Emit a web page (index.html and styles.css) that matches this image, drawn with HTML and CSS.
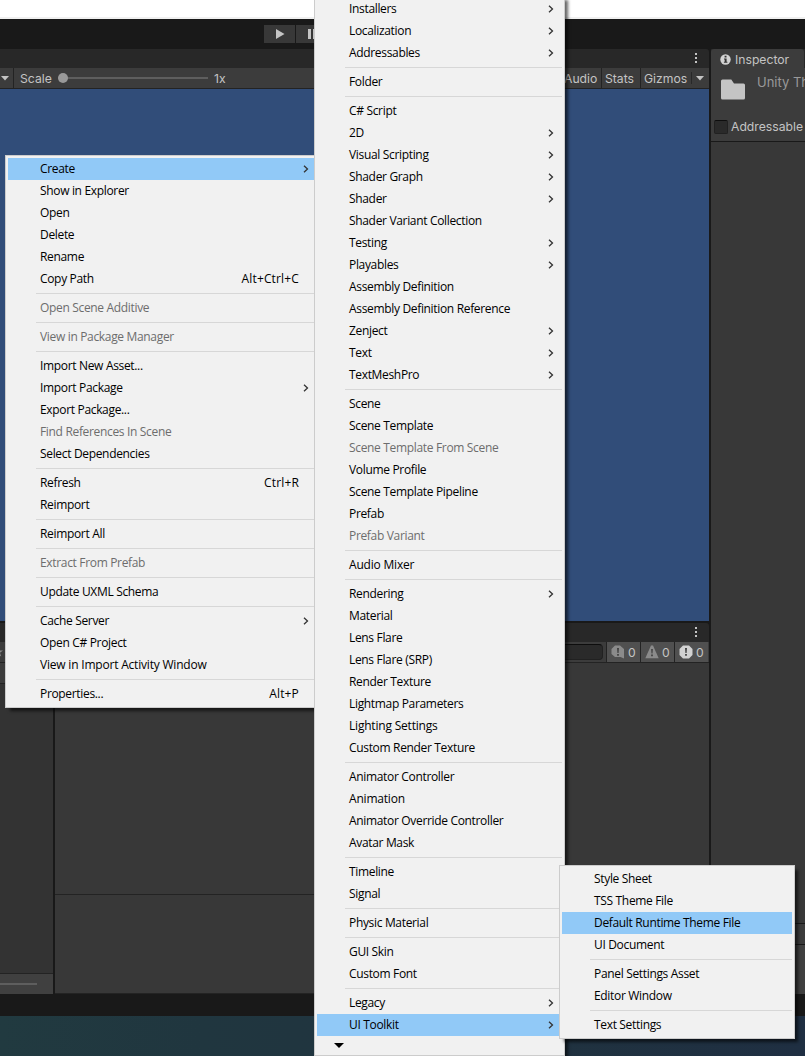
FILE: index.html
```html
<!DOCTYPE html>
<html lang="en">
<head>
    <meta charset="UTF-8">
    <title>Unity Editor</title>
    <link rel="stylesheet" href="styles.css">
</head>
<body>
    <svg width="0" height="0" class="defs">
        <symbol id="dots" viewBox="0 0 4 12"><path d="M1 1h2v2H1zM1 5h2v2H1zM1 9h2v2H1z" fill="#c4c4c4"/></symbol>
        <symbol id="down" viewBox="0 0 8 5"><path d="M0 0h8L4 4.5z" fill="#c4c4c4"/></symbol>
        <symbol id="arrow" viewBox="0 0 6 8"><path d="M1 .7L4.5 4 1 7.3" fill="none" stroke="#333" stroke-width="1.3"/></symbol>
    </svg>
    <div class="editor">
        <div class="titlebar"></div>
        <div class="playbar">
            <div class="playBtn"><svg width="10" height="12" viewBox="0 0 10 12"><path d="M1 1l8.5 5L1 11z" fill="#c4c4c4"/></svg></div>
            <div class="playBtn"><svg width="10" height="12" viewBox="0 0 10 12"><path d="M1 1h3v10H1zM6 1h3v10H6z" fill="#c4c4c4"/></svg></div>
        </div>
        <div class="docks">
            <div class="left">
                <div class="tabs"><svg class="dots"><use href="#dots"/></svg></div>
                <div class="toolbar">
                    <div class="drop"><svg width="8" height="5"><use href="#down"/></svg></div>
                    <span class="scale">Scale</span>
                    <div class="slider"><i></i></div>
                    <span class="factor">1x</span>
                    <div class="tools">
                        <span class="audio">Audio</span>
                        <span class="stats">Stats</span>
                        <span class="gizmos">Gizmos</span>
                        <div class="gizmoDrop"><svg width="8" height="5"><use href="#down"/></svg></div>
                    </div>
                </div>
                <div class="gameView"></div>
                <div class="tabs"><svg class="dots"><use href="#dots"/></svg></div>
                <div class="toolbar console">
                    <svg class="star" width="10" height="10" viewBox="0 0 10 10"><path d="M5 0l1.300 3.500H10L7 5.800 8.200 9.500 5 7.300 1.800 9.500 3 5.800 0 3.500h3.700z" fill="#8a8a8a"/></svg>
                    <div class="search"></div>
                    <div class="count"><svg width="14" height="14" viewBox="0 0 14 14"><path d="M4 .5h5L13 4v9.500L9.500 12H4L.5 9V4z" fill="#8b8b8b"/><path d="M6 3h2l-.4 5H6.400zM6.100 9h1.800v1.700H6.100z" fill="#444"/></svg><span>0</span></div>
                    <div class="count"><svg width="14" height="14" viewBox="0 0 14 14"><path d="M6 .5h2l5.700 12.800H.3z" fill="#8b8b8b"/><path d="M6.100 4h1.800l-.4 4.500h-1zM6.100 9.500h1.800v1.700H6.100z" fill="#444"/></svg><span>0</span></div>
                    <div class="count"><svg width="14" height="14" viewBox="0 0 14 14"><path d="M4 .5h6L13.500 4v6L10 13.500H4L.5 10V4z" fill="#d2d2d2"/><path d="M6 3h2l-.4 5H6.400zM6.100 9h1.800v1.700H6.100z" fill="#444"/></svg><span>0</span></div>
                </div>
                <div class="project">
                    <div class="tree">
                        <div class="treeTop"></div>
                        <div class="treeBottom"><i></i></div>
                    </div>
                    <div class="assets"><div class="assetsTop"></div></div>
                </div>
            </div>
            <div class="inspector">
                <div class="inspectorTabs">
                    <div class="tab"><svg width="11" height="11" viewBox="0 0 11 11"><circle cx="5.500" cy="5.500" r="5.200" fill="#d2d2d2"/><path d="M4.600 1.700h1.900v1.700H4.600zM4 4.400h2.600v3.400h.8v1H3.900v-1h.8V5.400H4z" fill="#333"/></svg>Inspector</div>
                </div>
                <div class="assetHead">
                    <div class="assetName">
                        <svg width="24" height="21" viewBox="0 0 24 21"><path d="M0 2Q0 .5 1.500.5h8.800L13 4.500h9.500Q24 4.500 24 6v13q0 1.500-1.500 1.500h-21Q0 20.500 0 19z" fill="#c4c4c4"/></svg>
                        <span>Unity Th</span>
                    </div>
                    <div class="addressable"><i></i><span>Addressable</span></div>
                </div>
                <div class="inspectorBody"></div>
                <div class="previewBar"></div>
                <div class="preview"></div>
            </div>
        </div>
        <div class="statusbar"></div>
        <div class="desktop"></div>
    </div>

    <ul class="menu contextMenu">
        <li class="active">Create<svg><use href="#arrow"/></svg></li>
        <li>Show in Explorer</li>
        <li>Open</li>
        <li>Delete</li>
        <li>Rename</li>
        <li>Copy Path<kbd>Alt+Ctrl+C</kbd></li>
        <li class="line"></li>
        <li class="disabled">Open Scene Additive</li>
        <li class="line"></li>
        <li class="disabled">View in Package Manager</li>
        <li class="line"></li>
        <li>Import New Asset...</li>
        <li>Import Package<svg><use href="#arrow"/></svg></li>
        <li>Export Package...</li>
        <li class="disabled">Find References In Scene</li>
        <li>Select Dependencies</li>
        <li class="line"></li>
        <li>Refresh<kbd>Ctrl+R</kbd></li>
        <li>Reimport</li>
        <li class="line"></li>
        <li>Reimport All</li>
        <li class="line"></li>
        <li class="disabled">Extract From Prefab</li>
        <li class="line"></li>
        <li>Update UXML Schema</li>
        <li class="line"></li>
        <li>Cache Server<svg><use href="#arrow"/></svg></li>
        <li>Open C# Project</li>
        <li class="wide">View in Import Activity Window</li>
        <li class="line"></li>
        <li>Properties...<kbd>Alt+P</kbd></li>
    </ul>

    <ul class="menu createMenu">
        <li>Installers<svg><use href="#arrow"/></svg></li>
        <li>Localization<svg><use href="#arrow"/></svg></li>
        <li>Addressables<svg><use href="#arrow"/></svg></li>
        <li class="line"></li>
        <li>Folder</li>
        <li class="line"></li>
        <li>C# Script</li>
        <li>2D<svg><use href="#arrow"/></svg></li>
        <li>Visual Scripting<svg><use href="#arrow"/></svg></li>
        <li>Shader Graph<svg><use href="#arrow"/></svg></li>
        <li>Shader<svg><use href="#arrow"/></svg></li>
        <li>Shader Variant Collection</li>
        <li>Testing<svg><use href="#arrow"/></svg></li>
        <li>Playables<svg><use href="#arrow"/></svg></li>
        <li>Assembly Definition</li>
        <li>Assembly Definition Reference</li>
        <li>Zenject<svg><use href="#arrow"/></svg></li>
        <li>Text<svg><use href="#arrow"/></svg></li>
        <li>TextMeshPro<svg><use href="#arrow"/></svg></li>
        <li class="line"></li>
        <li>Scene</li>
        <li>Scene Template</li>
        <li class="disabled">Scene Template From Scene</li>
        <li>Volume Profile</li>
        <li>Scene Template Pipeline</li>
        <li>Prefab</li>
        <li class="disabled">Prefab Variant</li>
        <li class="line"></li>
        <li class="wide">Audio Mixer</li>
        <li class="line"></li>
        <li>Rendering<svg><use href="#arrow"/></svg></li>
        <li>Material</li>
        <li>Lens Flare</li>
        <li>Lens Flare (SRP)</li>
        <li>Render Texture</li>
        <li>Lightmap Parameters</li>
        <li class="wide">Lighting Settings</li>
        <li>Custom Render Texture</li>
        <li class="line"></li>
        <li>Animator Controller</li>
        <li class="wide">Animation</li>
        <li>Animator Override Controller</li>
        <li>Avatar Mask</li>
        <li class="line"></li>
        <li>Timeline</li>
        <li>Signal</li>
        <li class="line"></li>
        <li>Physic Material</li>
        <li class="line"></li>
        <li>GUI Skin</li>
        <li>Custom Font</li>
        <li class="line"></li>
        <li>Legacy<svg><use href="#arrow"/></svg></li>
        <li class="active">UI Toolkit<svg><use href="#arrow"/></svg></li>
        <li class="more"></li>
    </ul>

    <ul class="menu toolkitMenu">
        <li>Style Sheet</li>
        <li>TSS Theme File</li>
        <li class="active">Default Runtime Theme File</li>
        <li>UI Document</li>
        <li class="line"></li>
        <li>Panel Settings Asset</li>
        <li>Editor Window</li>
        <li class="line"></li>
        <li>Text Settings</li>
    </ul>
</body>
</html>
```
FILE: styles.css
```css
* { margin: 0; padding: 0; box-sizing: border-box; }

body {
    width: 805px; height: 1056px; overflow: hidden; position: relative;
    font: 12.2px/18px Inter, "Liberation Sans", sans-serif;
    color: #c4c4c4; background: #191919;
}
svg { display: block; flex: none; }
.defs { position: absolute; }

/* editor window */
.editor { height: 1056px; display: flex; flex-direction: column; }
.titlebar { height: 19px; flex: none; background: #fff; border-bottom: 2px solid #f0f0f0; }
.playbar { height: 30px; flex: none; display: flex; gap: 1px; padding: 6px 0 0 264px; }
.playBtn { width: 31px; height: 18px; background: #383838; display: flex; align-items: center; justify-content: center; }
.docks { height: 945px; flex: none; display: flex; gap: 2px; }
.statusbar { height: 22px; flex: none; }
.desktop { flex: 1; background: linear-gradient(90deg, #213a40, #20363f 25%, #20333f 60%, #1f2f42); }

/* game view and console */
.left { width: 709px; display: flex; flex-direction: column; }
.tabs { height: 19px; flex: none; background: #282828; display: flex; justify-content: flex-end; padding: 3px 11px 0 0; border-radius: 0 3px 0 0; }
.dots { width: 4px; height: 12px; }
.toolbar { height: 21px; flex: none; background: #3c3c3c; border-bottom: 1px solid #232323; display: flex; align-items: center; }
.drop { width: 14px; height: 20px; padding: 8px 0 0 1px; border-right: 1px solid #232323; }
.scale { width: 44px; padding: 2px 0 0 6px; }
.factor { padding-top: 2px; }
.slider { width: 150px; height: 2px; background: #5e5e5e; margin-right: 6px; display: flex; align-items: center; }
.slider i { width: 10px; height: 10px; border-radius: 50%; background: #999; }
.tools { margin-left: auto; display: flex; align-items: center; line-height: 22px; }
.audio, .stats { height: 20px; border-right: 1px solid #232323; }
.audio { width: 38px; }
.stats { width: 39px; padding-left: 3px; }
.gizmos { width: 50px; height: 20px; padding-left: 3px; }
.gizmoDrop { width: 18px; border-left: 1px solid #282828; height: 12px; padding: 4px 5px 0 4px; }
.gameView { height: 534px; flex: none; background: #314d79; border-bottom: 2px solid #191919; }
.console { justify-content: flex-end; padding-right: 1px; }
.star { margin: 0 auto 0 -7px; }
.search { width: 300px; height: 16px; background: #2a2a2a; border: 1px solid #212121; border-top-color: #0d0d0d; border-radius: 4px; margin-right: 3px; }
.count { width: 34px; height: 20px; padding-left: 4px; background: #505050; border-left: 1px solid #232323; display: flex; align-items: center; gap: 3px; }
.count span { padding-top: 2px; }
.project { flex: 1; display: flex; gap: 2px; }
.tree { width: 53px; background: #333; display: flex; flex-direction: column; justify-content: space-between; }
.treeTop { height: 21px; background: #3c3c3c; border-bottom: 1px solid #232323; }
.treeBottom { height: 21px; background: #404040; border-top: 1px solid #232323; padding-top: 9px; }
.treeBottom i { display: block; width: 37px; height: 2px; background: #5e5e5e; }
.assets { flex: 1; background: #383838; border-bottom: 1px solid #232323; }
.assetsTop { height: 232px; border-bottom: 1px solid #232323; }

/* inspector */
.inspector { flex: 1; display: flex; flex-direction: column; background: #383838; overflow: hidden; }
.inspectorTabs { height: 19px; flex: none; background: #282828; }
.tab { width: 93px; height: 19px; background: #3c3c3c; border-radius: 3px 3px 0 0; display: flex; align-items: center; gap: 4px; padding: 2px 0 0 9px; }
.assetHead { height: 74px; flex: none; background: #3c3c3c; border-bottom: 1px solid #191919; }
.assetName { display: flex; gap: 12px; padding: 11px 0 0 10px; font-size: 13px; line-height: 18px; white-space: nowrap; color: #999; }
.assetName span { margin-top: -6px; }
.addressable { display: flex; align-items: center; gap: 3px; margin-top: 18px; padding-left: 3px; line-height: 16px; }
.addressable span { padding-top: 1px; }
.addressable i { width: 14px; height: 14px; background: #2a2a2a; border: 1px solid #212121; border-top-color: #0d0d0d; border-radius: 2px; }
.inspectorBody { flex: 1; }
.previewBar { height: 22px; background: #3c3c3c; border: 1px solid #191919; border-width: 1px 0; }
.preview { height: 49px; background: #404040; }

/* context menus */
.menu {
    position: absolute; list-style: none; padding: 2px;
    background: #f1f1f1; border: 1px solid #ccc;
    box-shadow: 4px 4px 3px -1px rgba(0, 0, 0, 0.6);
    font: 12px/22px "Open Sans", "Noto Sans", sans-serif; color: #000;
    letter-spacing: -0.33px;
}
.menu li { height: 22px; display: flex; align-items: center; padding-left: 32px; white-space: nowrap; }
.menu svg { width: 6px; height: 8px; margin: 0 8px 0 auto; }
.contextMenu svg { margin-right: 5px; }
.menu kbd { font: inherit; letter-spacing: 0.15px; margin: 0 15px 0 auto; }
.menu .wide { letter-spacing: -0.2px; }
.menu .active { background: #91c9f7; }
.menu .disabled { color: #6d6d6d; }
.menu .line { height: 1px; margin: 3px 0 3px 28px; padding: 0; background: #d7d7d7; }
.contextMenu { left: 5px; top: 155px; width: 312px; }
.createMenu { left: 314px; top: -5px; width: 251px; height: 1061px; }
.toolkitMenu { left: 559px; top: 865px; width: 236px; }
/* scroll arrow under the last item */
.menu .more { height: 17px; padding-left: 17px; }
.more::after { content: ""; border: 5px solid transparent; border-top-color: #000; border-bottom: 0; margin-top: 2px; }
```
